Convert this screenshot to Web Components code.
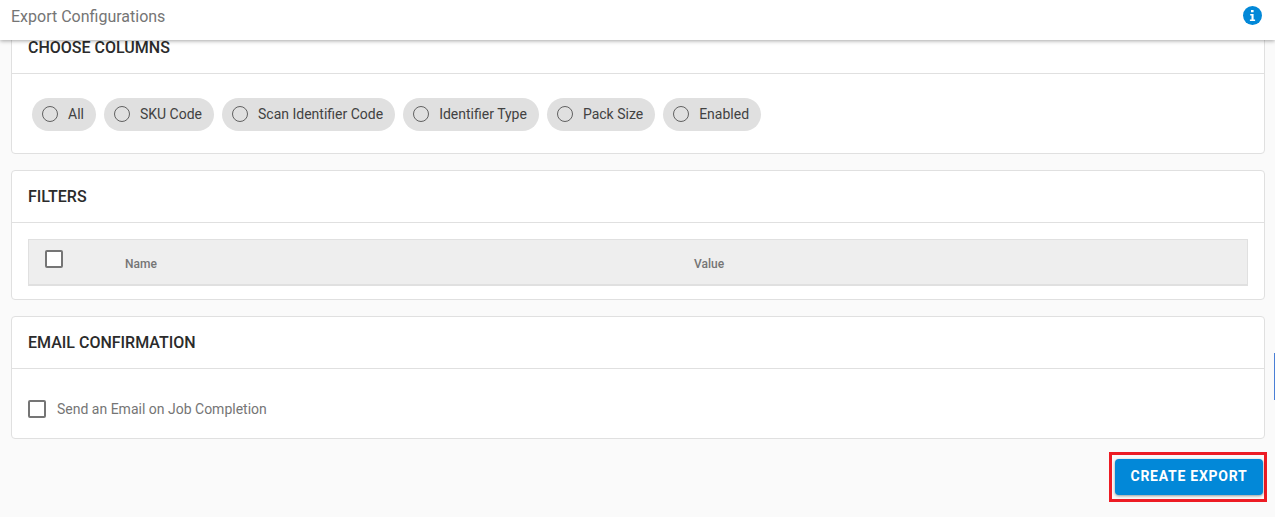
<!DOCTYPE html>
<html>
<head>
<meta charset="utf-8">
<title>Export Configurations</title>
<style>
  html, body { margin: 0; height: 517px; overflow: hidden; background: #fafafa; font-family: Roboto, "Liberation Sans", sans-serif; }
</style>
</head>
<body>
<export-page></export-page>

<script>
// barra superior
class TopBar extends HTMLElement {
  constructor() {
    super();
    this.attachShadow({ mode: 'open' });
    this.shadowRoot.innerHTML = `
      <style>
        :host { display: flex; position: relative; z-index: 2; height: 40px; box-sizing: border-box; padding: 0 13px 0 11px; background: #fff; box-shadow: 0 1px 4px rgba(0,0,0,.35); justify-content: space-between; }
        span { font-size: 16px; line-height: 33px; color: #757575; }
        svg { width: 19px; height: 19px; margin-top: 5.5px; }
      </style>
      <span><slot></slot></span>
      <svg viewBox="0 0 19 19">
        <circle cx="9.5" cy="9.5" r="9.5" fill="#0288d8"/>
        <path d="M8 4h2.6v2.2H8zM7.2 8h3.4v5.6h1.5V15H6.9v-1.4h1.6V9.4H7.2z" fill="#fff"/>
      </svg>`;
  }
}

// tarjeta con titulo y cuerpo
class ConfigCard extends HTMLElement {
  constructor() {
    super();
    this.attachShadow({ mode: 'open' });
    this.shadowRoot.innerHTML = `
      <style>
        :host { display: block; background: #fff; border: 1px solid #e0e0e0; border-radius: 4px; }
        header { height: 52px; box-sizing: border-box; padding-left: 16px; border-bottom: 1px solid #e0e0e0; font-size: 16px; font-weight: 500; line-height: 51px; color: #2b2b2b; }
      </style>
      <header><slot name="title"></slot></header>
      <slot></slot>`;
  }
}

class ColumnChip extends HTMLElement {
  constructor() {
    super();
    this.attachShadow({ mode: 'open' });
    this.shadowRoot.innerHTML = `
      <style>
        :host { display: inline-flex; align-items: center; height: 33px; box-sizing: border-box; padding: 0 12px 1px 10px; border-radius: 17px; background: #e0e0e0; font-size: 14px; color: #424242; white-space: nowrap; }
        i { width: 16px; height: 16px; box-sizing: border-box; margin-right: 10px; border: 1.3px solid #616161; border-radius: 50%; }
      </style>
      <i></i><slot></slot>`;
  }
}

class CheckBox extends HTMLElement {
  constructor() {
    super();
    this.attachShadow({ mode: 'open' });
    this.shadowRoot.innerHTML = `
      <style>
        :host { display: block; width: 18px; height: 18px; box-sizing: border-box; border: 2px solid #757575; border-radius: 2px; background: #fff; flex: none; }
      </style>`;
  }
}

class FilterTable extends HTMLElement {
  constructor() {
    super();
    this.attachShadow({ mode: 'open' });
    this.shadowRoot.innerHTML = `
      <style>
        :host { display: grid; grid-template-columns: 96px 569px 1fr; height: 47px; box-sizing: border-box; background: #eee; border: 1px solid #e0e0e0; border-bottom-width: 2px; font-size: 12px; font-weight: 500; color: #757575; }
        check-box { margin: 10px 0 0 16px; }
        span { line-height: 49px; }
      </style>
      <div><check-box></check-box></div>
      <span>Name</span>
      <span>Value</span>`;
  }
}

class ExportPage extends HTMLElement {
  constructor() {
    super();
    this.attachShadow({ mode: 'open' });
    this.shadowRoot.innerHTML = `
      <style>
        :host { display: block; }
        main { display: flex; flex-direction: column; gap: 16px; margin-top: -19px; padding: 0 10px 0 11px; }
        .chips { display: flex; gap: 8px; height: 79px; box-sizing: border-box; padding: 24px 0 0 20px; }
        .filters { padding: 16px 16px 13px 16px; }
        .email { display: flex; align-items: center; gap: 11px; height: 69px; box-sizing: border-box; padding: 10px 0 0 16px; font-size: 14px; color: #757575; }
        footer { display: flex; justify-content: flex-end; padding: 13px 8px 0 0; }
        .outline { padding: 4px 1px 4px 3px; border: 3px solid #ed1c24; }
        button { display: block; width: 148px; height: 36px; padding: 0 0 2px; border: 0; border-radius: 4px; background: #0288d8; box-shadow: 0 1px 3px rgba(0,0,0,.4); font: 700 14px Roboto, sans-serif; letter-spacing: .75px; color: #fff; }
        .tab { position: absolute; right: 0; top: 353px; width: 1px; height: 47px; background: #4a7fd6; }
      </style>
      <top-bar>Export Configurations</top-bar>
      <main>
        <config-card>
          <span slot="title">CHOOSE COLUMNS</span>
          <div class="chips">
            <column-chip>All</column-chip>
            <column-chip>SKU Code</column-chip>
            <column-chip>Scan Identifier Code</column-chip>
            <column-chip>Identifier Type</column-chip>
            <column-chip>Pack Size</column-chip>
            <column-chip>Enabled</column-chip>
          </div>
        </config-card>
        <config-card>
          <span slot="title">FILTERS</span>
          <div class="filters"><filter-table></filter-table></div>
        </config-card>
        <config-card>
          <span slot="title">EMAIL CONFIRMATION</span>
          <div class="email"><check-box></check-box>Send an Email on Job Completion</div>
        </config-card>
      </main>
      <footer><div class="outline"><button>CREATE EXPORT</button></div></footer>
      <div class="tab"></div>`;
  }
}

customElements.define('top-bar', TopBar);
customElements.define('config-card', ConfigCard);
customElements.define('column-chip', ColumnChip);
customElements.define('check-box', CheckBox);
customElements.define('filter-table', FilterTable);
customElements.define('export-page', ExportPage);
</script>
</body>
</html>
